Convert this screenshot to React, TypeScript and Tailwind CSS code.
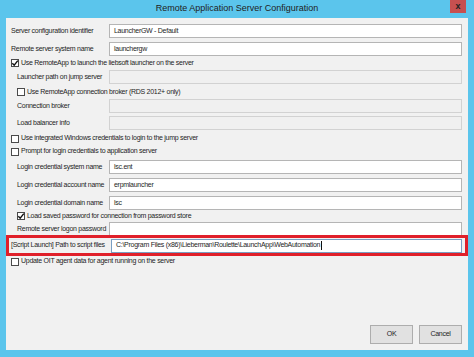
import React from 'react';

const font = { fontFamily: '"Liberation Sans", Arial, sans-serif' };

function Check({ checked }: { checked?: boolean }) {
  return (
    <span className="relative inline-block w-[8px] h-[8px] border border-[#4a4a4a] bg-white shrink-0">
      {checked && (
        <svg viewBox="0 0 8 8" className="absolute left-[-1px] top-[-1px] w-[8px] h-[8px]">
          <path d="M1.3 4.2 L3.2 6.2 L6.8 1.6" fill="none" stroke="#111" strokeWidth="1.4" />
        </svg>
      )}
    </span>
  );
}

function Field({
  label,
  value,
  disabled,
  indent,
  h,
}: {
  label: string;
  value?: string;
  disabled?: boolean;
  indent?: boolean;
  h: string;
}) {
  return (
    <div className={`flex items-start pr-[6px] ${h}`}>
      <div className={`w-[103px] shrink-0 h-[14px] flex items-center whitespace-nowrap ${indent ? 'pl-[11px]' : 'pl-[5px]'}`}>
        {label}
      </div>
      <div
        className={`flex-1 h-[14px] flex items-center px-[4px] border ${
          disabled ? 'bg-[#f0f0f0] border-[#d2d2d2]' : 'bg-white border-[#b5b5b5]'
        }`}
      >
        {value}
      </div>
    </div>
  );
}

function CheckRow({
  label,
  checked,
  indent,
  h,
}: {
  label: string;
  checked?: boolean;
  indent?: boolean;
  h: string;
}) {
  return (
    <div className={`flex items-center gap-[2px] ${indent ? 'pl-[11px]' : 'pl-[5px]'} ${h}`}>
      <Check checked={checked} />
      <span>{label}</span>
    </div>
  );
}

export default function App() {
  return (
    <div className="w-[474px] h-[357px] bg-[#5bc5ec] flex flex-col text-[#1e1e1e]" style={font}>
      <div className="relative h-[18px] shrink-0 flex items-center justify-center text-[9px] text-[#222]">
        Remote Application Server Configuration
        <div className="absolute right-[8px] top-0 w-[16px] h-[13px] bg-[#c75050] flex items-center justify-center text-[9px] font-bold text-[#222]">
          x
        </div>
      </div>
      <div className="mx-[6px] mb-[7px] flex-1 bg-[#f1f1f1] flex flex-col pt-[6px] text-[7px] tracking-[-0.28px]">
        <Field label="Server configuration identifier" value="LauncherGW - Default" h="h-[18px]" />
        <Field label="Remote server system name" value="launchergw" h="h-[14px]" />
        <CheckRow label="Use RemoteApp to launch the liebsoft launcher on the server" checked h="h-[14px]" />
        <Field label="Launcher path on jump server" disabled indent h="h-[15px]" />
        <CheckRow label="Use RemoteApp connection broker (RDS 2012+ only)" indent h="h-[14px]" />
        <Field label="Connection broker" disabled indent h="h-[17px]" />
        <Field label="Load balancer info" disabled indent h="h-[16px]" />
        <CheckRow label="Use integrated Windows credentials to login to the jump server" h="h-[13px]" />
        <CheckRow label="Prompt for login credentials to application server" h="h-[13px]" />
        <div className="h-[2px]" />
        <Field label="Login credential system name" value="lsc.ent" indent h="h-[18px]" />
        <Field label="Login credential account name" value="erpmlauncher" indent h="h-[18px]" />
        <Field label="Login credential domain name" value="lsc" indent h="h-[14px]" />
        <CheckRow label="Load saved password for connection from password store" checked indent h="h-[12px]" />
        <Field label="Remote server logon password" indent h="h-[13px]" />
        <div className="h-[21px] border-[3px] border-[#e0202a] flex items-center pl-[2px] pr-[3px]">
          <div className="w-[100px] shrink-0 whitespace-nowrap">[Script Launch] Path to script files</div>
          <div className="flex-1 h-[14px] flex items-center px-[4px] bg-white border border-[#7a9ec2]">
            C:\Program Files (x86)\Lieberman\Roulette\LaunchApp\WebAutomation
            <span className="inline-block w-px h-[9px] bg-[#111] ml-px" />
          </div>
        </div>
        <CheckRow label="Update OIT agent data for agent running on the server" h="h-[11px]" />
        <div className="flex-1" />
        <div className="flex justify-end gap-[6px] pr-[6px] pb-[6px]">
          <div className="w-[43px] h-[19px] bg-[#e1e1e1] border border-[#adadad] flex items-center justify-center">OK</div>
          <div className="w-[43px] h-[19px] bg-[#e1e1e1] border border-[#adadad] flex items-center justify-center">Cancel</div>
        </div>
      </div>
    </div>
  );
}
